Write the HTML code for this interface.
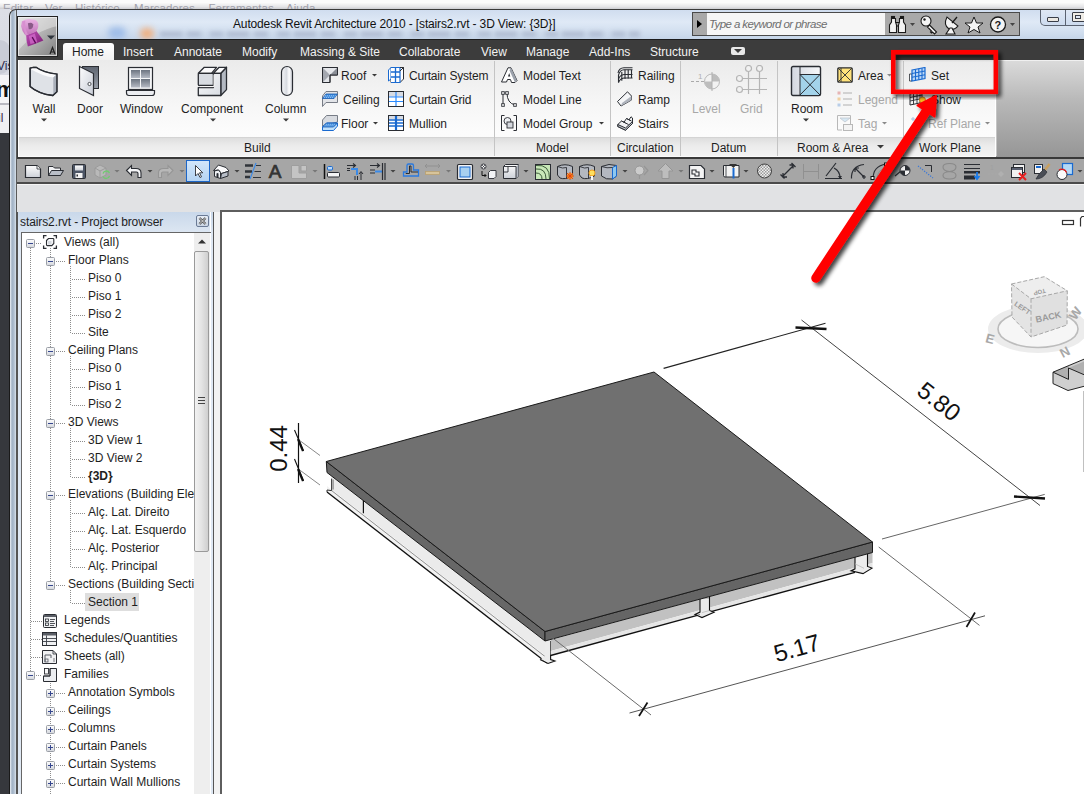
<!DOCTYPE html>
<html><head><meta charset="utf-8">
<style>
*{box-sizing:border-box}
html,body{margin:0;padding:0}
body{width:1084px;height:794px;overflow:hidden;position:relative;background:#fff;font-family:"Liberation Sans",sans-serif;font-size:12px;color:#1e1e1e}
.a{position:absolute}
.t{position:absolute;white-space:nowrap;line-height:14px}
</style></head><body>

<!-- desktop behind -->
<div class="a" style="left:0;top:0;width:1084px;height:10px;background:linear-gradient(#fbfbfb 25%,#e6e6e8 65%,#c2c4ca)"></div>
<div class="t" style="left:3px;top:1px;color:#a0a0aa;font-size:11.5px">Editar</div><div class="t" style="left:45px;top:1px;color:#a0a0aa;font-size:11.5px">Ver</div><div class="t" style="left:75px;top:1px;color:#a0a0aa;font-size:11.5px">Histórico</div><div class="t" style="left:134px;top:1px;color:#a0a0aa;font-size:11.5px">Marcadores</div><div class="t" style="left:208.5px;top:1px;color:#a0a0aa;font-size:11.5px">Ferramentas</div><div class="t" style="left:286px;top:1px;color:#a0a0aa;font-size:11.5px">Ajuda</div>
<div class="a" style="left:0;top:133px;width:10px;height:661px;background:#36383d"></div>
<div class="a" style="left:0;top:9px;width:10px;height:124px;background:linear-gradient(#dcdee6,#d6d8e0)"></div>
<div class="a" style="left:0;top:40px;width:10px;height:34px;background:#c9ccd6;border-radius:0 14px 14px 0"></div>
<div class="t" style="left:-3px;top:59px;color:#2a2a50;font-size:12px">Vis</div>
<div class="a" style="left:0;top:75px;width:10px;height:28px;background:#f4f4f6"></div>
<div class="t" style="left:-4px;top:78px;color:#111;font-size:22px;font-weight:bold;line-height:24px">m</div>
<div class="a" style="left:0;top:103px;width:10px;height:2px;background:#b8b8c0"></div>
<div class="a" style="left:0;top:105px;width:10px;height:28px;background:#f0f0f2"></div>
<div class="t" style="left:-2px;top:111px;color:#402040;font-size:12px">il</div>

<!-- window frame -->
<div class="a" style="left:9px;top:9px;width:1080px;height:790px;border-radius:7px 0 0 0;background:linear-gradient(90deg,#eef2f8 0px,#a0b1c4 2px,#b0bfd0 4px,#d8e2ec 6px,#5a5a5a 6px,#5a5a5a 7px,#dde 7px);border-top:1px solid #3a3a3a;border-left:1px solid #1a1a1a"></div>
<!-- title bar glass -->
<div class="a" style="left:17px;top:10px;width:1067px;height:30px;background:linear-gradient(#d0ddef,#dfe9f6 40%,#d3e0f0 70%,#c4d4e8)"></div>
<div class="a" style="left:160px;top:31px;width:480px;height:6px;background:repeating-linear-gradient(90deg,rgba(120,130,160,.32) 0 22px,rgba(170,180,205,.12) 22px 27px,rgba(110,120,150,.28) 27px 41px,rgba(180,190,210,.1) 41px 50px,rgba(120,130,160,.3) 50px 63px,rgba(180,190,210,.12) 63px 67px);filter:blur(2.2px)"></div>
<div class="a" style="left:108px;top:27px;width:18px;height:12px;background:#9fbde8;border-radius:9px;filter:blur(3px)"></div>
<div class="a" style="left:140px;top:28px;width:14px;height:11px;background:#f0b080;border-radius:6px;filter:blur(3px)"></div>
<div class="t" style="left:233px;top:17px;color:#111;font-size:12px;letter-spacing:-0.15px">Autodesk Revit Architecture 2010 - [stairs2.rvt - 3D View: {3D}]</div>

<!-- search box -->
<div class="a" style="left:692px;top:12px;width:328px;height:24px;background:#a9a9a9;border:1px solid #4a4a4a"></div>
<div class="a" style="left:707px;top:13px;width:178px;height:22px;background:#f6f6f6"></div>
<svg class="a" style="left:696px;top:19px" width="8" height="10"><path d="M1 1 L6 5 L1 9Z" fill="#000"/></svg>
<div class="t" style="left:709px;top:17px;color:#6e6e6e;font-size:11.5px;font-style:italic;letter-spacing:-0.6px">Type a keyword or phrase</div>
<svg class="a" style="left:886px;top:13px" width="134" height="22" viewBox="0 0 134 22">
 <g fill="#f4f4f4" stroke="#1a1a1a" stroke-width="1.1">
  <path d="M5.5 5.5 H9.5 V9 L10.5 12 V19.5 H3.5 V12 L5.5 9Z"/><path d="M13.5 5.5 H17.5 V9 L19.5 12 V19.5 H12.5 V12 L13.5 9Z"/>
  <path d="M9.5 9.5 H13.5 M10.5 13 H12.5"/>
  <rect x="5.5" y="3.5" width="3" height="2" fill="#1a1a1a"/><rect x="14.5" y="3.5" width="3" height="2" fill="#1a1a1a"/>
 </g>
 <path d="M24 10 L29 10 L26.5 13Z" fill="#444"/>
 <g stroke="#1a1a1a" fill="#f4f4f4" stroke-width="1.1"><path d="M43.5 12 L50.5 19 L48.5 21 L46.5 19 L45.5 20 L44.5 19 L45.5 18 L41.5 14Z"/><circle cx="40" cy="8" r="5"/><circle cx="38.5" cy="6.5" r="1.2" fill="#1a1a1a" stroke="none"/></g>
 <g stroke="#1a1a1a" fill="#f4f4f4" stroke-width="1.1"><path d="M61 4 Q57 12 63 16 Q68 18 72 13Z"/><path d="M64 15 L60 21 H69 L66 15Z"/><path d="M66 10 L71 4" stroke-width="1.3"/></g>
 <path d="M88 4 L90.5 10 L97 10 L92 14 L94 20 L88 16.5 L82 20 L84 14 L79 10 L85.5 10Z" fill="#f4f4f4" stroke="#1a1a1a"/>
 <circle cx="112" cy="11.5" r="7.5" fill="#f4f4f4" stroke="#1a1a1a" stroke-width="1.3"/>
 <text x="108.5" y="16" font-family="Liberation Sans" font-weight="bold" font-size="11" fill="#1a1a1a">?</text>
 <path d="M124 10 L129 10 L126.5 13Z" fill="#444"/>
</svg>
<!-- window buttons -->
<div class="a" style="left:1040px;top:10px;width:50px;height:16px;background:linear-gradient(#dfe8f5,#cddbee);border:1px solid #5a6270;border-top:none;border-radius:0 0 0 5px"></div>
<div class="a" style="left:1065px;top:10px;width:1px;height:15px;background:#5a6270"></div>
<div class="a" style="left:1047px;top:17px;width:12px;height:5px;border:1px solid #3a3e48;border-radius:1px;background:#ebe8e2"></div>
<div class="a" style="left:1072px;top:12px;width:13px;height:10px;border:1px solid #3a3e48;border-radius:1px;background:#efece6"></div>
<div class="a" style="left:1075px;top:15px;width:6px;height:4px;border:1px solid #3a3e48;background:#dfe8f5"></div>

<!-- tab bar -->
<div class="a" style="left:17px;top:39px;width:1067px;height:22px;background:#3c3c3c;border-top:1px solid #1c1c1c"></div>
<div class="a" style="left:63px;top:43px;width:51px;height:18px;background:linear-gradient(#fefefe,#f0f0f0);border-radius:3px 3px 0 0"></div>
<div class="t" style="left:72px;top:45px;color:#1e1e1e">Home</div>
<div class="t" style="left:123px;top:45px;color:#f2f2f2">Insert</div>
<div class="t" style="left:174px;top:45px;color:#f2f2f2">Annotate</div>
<div class="t" style="left:242px;top:45px;color:#f2f2f2">Modify</div>
<div class="t" style="left:300px;top:45px;color:#f2f2f2">Massing &amp; Site</div>
<div class="t" style="left:399px;top:45px;color:#f2f2f2">Collaborate</div>
<div class="t" style="left:481px;top:45px;color:#f2f2f2">View</div>
<div class="t" style="left:526px;top:45px;color:#f2f2f2">Manage</div>
<div class="t" style="left:589px;top:45px;color:#f2f2f2">Add-Ins</div>
<div class="t" style="left:650px;top:45px;color:#f2f2f2">Structure</div>
<div class="a" style="left:731px;top:47px;width:14px;height:8px;background:#e8e8e8;border-radius:2px"></div>
<svg class="a" style="left:734px;top:49px" width="8" height="5"><path d="M0 0 L8 0 L4 4Z" fill="#3c3c3c"/></svg>

<!-- ribbon -->
<div class="a" style="left:17px;top:60px;width:1067px;height:100px;background:#3c3c3c"></div>
<div class="a" style="left:18px;top:60px;width:978px;height:97px;background:linear-gradient(#ebebeb,#f6f6f6 45%,#fcfcfc 75%,#fafafa);border-left:1px solid #fff;border-right:1px solid #fff"></div>
<div class="a" style="left:996px;top:60px;width:88px;height:97px;background:linear-gradient(#dadada,#b9b9b9 40%,#969696);border-top:1px solid #f0f0f0"></div>
<div class="a" style="left:19px;top:137px;width:976px;height:19px;background:linear-gradient(#dedede,#ebebeb 40%,#f3f3f3);border-top:1px solid #d4d4d4"></div>
<div class="a" style="left:494px;top:61px;width:1px;height:95px;background:#c4c4c4"></div>
<div class="a" style="left:610px;top:61px;width:1px;height:95px;background:#c4c4c4"></div>
<div class="a" style="left:680px;top:61px;width:1px;height:95px;background:#c4c4c4"></div>
<div class="a" style="left:777px;top:61px;width:1px;height:95px;background:#c4c4c4"></div>
<div class="a" style="left:903px;top:61px;width:1px;height:95px;background:#c4c4c4"></div>
<div class="a" style="left:996px;top:61px;width:1px;height:95px;background:#c4c4c4"></div>

<!-- ribbon content -->
<!-- Build: large buttons -->
<svg class="a" style="left:28px;top:65px" width="32" height="32" viewBox="0 0 32 32">
 <path d="M2.1 3.2 L5.3 2.3 L8.4 2.5 Q15 7.5 28.9 9.1 L28.9 26.6 L24.8 30.5 Q10 28.5 2.1 21.4Z" fill="#dfe2e7" stroke="#2a2d33" stroke-width="1.3"/>
 <path d="M2.6 4 Q14 11 25.3 12.5 L28.5 9.4 Q15 7.5 8.4 2.9 L5.3 2.8Z" fill="#fbfbfc"/>
 <path d="M25.3 12.5 L28.5 9.4 L28.5 26.6 L25.3 30Z" fill="#aab0ba"/>
 <path d="M2.1 3.2 L5.3 2.3 L8.4 2.5 Q15 7.5 28.9 9.1 L28.9 26.6 L24.8 30.5 Q10 28.5 2.1 21.4Z" fill="none" stroke="#2a2d33" stroke-width="1.3"/>
</svg>
<svg class="a" style="left:78px;top:65px" width="23" height="32" viewBox="0 0 23 32">
 <defs><linearGradient id="gd" x1="0" y1="0" x2="1" y2="1"><stop offset="0" stop-color="#fdfdfe"/><stop offset="1" stop-color="#c9ced8"/></linearGradient><linearGradient id="gdk" x1="0" y1="0" x2="0" y2="1"><stop offset="0" stop-color="#5d6470"/><stop offset="1" stop-color="#9aa0aa"/></linearGradient></defs>
 <rect x="4.5" y="1.5" width="16" height="22" fill="url(#gdk)" stroke="#2a2d33"/>
 <path d="M1.5 1.5 L15.5 8.5 L15.5 30.5 L1.5 23.5Z" fill="url(#gd)" stroke="#2a2d33" stroke-width="1.2"/>
 <circle cx="11.5" cy="19" r="1.6" fill="#fff" stroke="#2a2d33" stroke-width=".8"/>
</svg>
<svg class="a" style="left:125px;top:66px" width="31" height="31" viewBox="0 0 31 31">
 <defs><linearGradient id="gwin" x1="0" y1="0" x2="0" y2="1"><stop offset="0" stop-color="#6c7480"/><stop offset="1" stop-color="#b5bac4"/></linearGradient></defs>
 <rect x="3.5" y="1.5" width="24" height="22" fill="#f4f5f7" stroke="#2a2d33" stroke-width="1.2"/>
 <rect x="6" y="4" width="9" height="8" fill="url(#gwin)"/><rect x="16" y="4" width="9" height="8" fill="url(#gwin)"/>
 <rect x="6" y="13" width="9" height="8.5" fill="url(#gwin)"/><rect x="16" y="13" width="9" height="8.5" fill="url(#gwin)"/>
 <path d="M1.5 24.5 H29.5 V27 Q29.5 29.5 27 29.5 H4 Q1.5 29.5 1.5 27Z" fill="#eceef2" stroke="#2a2d33" stroke-width="1.2"/>
</svg>
<svg class="a" style="left:197px;top:66px" width="32" height="32" viewBox="0 0 32 32">
 <defs><linearGradient id="gc" x1="0" y1="0" x2="1" y2="1"><stop offset="0" stop-color="#f8f9fa"/><stop offset="1" stop-color="#d9dde3"/></linearGradient></defs>
 <g stroke="#2a2d33" stroke-width="1.3" stroke-linejoin="round">
 <path d="M23.8 7.3 L29.5 1.3 V23.6 L23.8 29.5Z" fill="#b3b9c2"/>
 <path d="M16.4 7.3 L22.1 1.3 H29.5 L23.8 7.3Z" fill="#fbfbfc"/>
 <path d="M1.3 7.3 L7.3 1.3 H19.5 L14.5 7.3Z" fill="#fbfbfc"/>
 <path d="M16.4 7.3 H23.8 V29.5 H1.3 V21.6 H16.4Z" fill="url(#gc)"/>
 <rect x="1.3" y="7.3" width="15.1" height="12.2" rx="1" fill="#d8dce2"/>
 </g>
 <path d="M2.5 20.6 H17 V8.5" fill="none" stroke="#fff" stroke-width="1"/>
</svg>
<svg class="a" style="left:279px;top:65px" width="16" height="32" viewBox="0 0 16 32">
 <defs><linearGradient id="gcol" x1="0" y1="0" x2="1" y2="0"><stop offset="0" stop-color="#f5f6f8"/><stop offset=".45" stop-color="#d8dbe1"/><stop offset=".7" stop-color="#fdfdfe"/><stop offset="1" stop-color="#c4c8d0"/></linearGradient></defs>
 <rect x="2.5" y="1.5" width="11" height="29" rx="5.5" fill="url(#gcol)" stroke="#2a2d33" stroke-width="1.2"/>
</svg>
<div class="t" style="left:32.5px;top:102px">Wall</div>
<div class="t" style="left:77px;top:102px">Door</div>
<div class="t" style="left:120px;top:102px">Window</div>
<div class="t" style="left:181px;top:102px">Component</div>
<div class="t" style="left:265px;top:102px">Column</div>
<svg class="a" style="left:0;top:0" width="1084" height="160" viewBox="0 0 1084 160">
 <g fill="#3a3a3a">
  <path d="M41 118.5 H47 L44 121.5Z"/><path d="M210 118.5 H216 L213 121.5Z"/><path d="M283 118.5 H289 L286 121.5Z"/>
  <path d="M803 118.5 H809 L806 121.5Z"/>
  <path d="M372 74 H377 L374.5 76.5Z"/><path d="M373 122 H378 L375.5 124.5Z"/>
  <path d="M599 122 H604 L601.5 124.5Z"/>
  <path d="M877 145 H884 L880.5 148.5Z"/>
 </g>
 <g fill="#8a8a8a">
  <path d="M887 74 H892 L889.5 76.5Z"/><path d="M882 122 H887 L884.5 124.5Z"/><path d="M985 122 H990 L987.5 124.5Z"/>
 </g>
</svg>
<!-- Build: small -->
<svg class="a" style="left:322px;top:67px" width="16" height="16" viewBox="0 0 16 16">
 <path d="M.5 .5 H15.5 V8 H8 V15.5 H.5Z" fill="#e4e6ea" stroke="#2a2d33"/>
 <path d="M.5 .5 L8 8 L.5 15.5Z" fill="#a4a8b0"/><path d="M15.5 .5 L8 8 H15.5Z" fill="#8a8e96"/>
 <path d="M.5 .5 H15.5 V8 H8 V15.5 H.5Z" fill="none" stroke="#2a2d33"/>
</svg>
<svg class="a" style="left:322px;top:91px" width="16" height="16" viewBox="0 0 16 16">
 <path d="M.5 15.5 V5 L4 .5 H15.5 V11.5 H4Z" fill="#e2e4e8" stroke="#777c86"/>
 <path d="M.5 7.5 L4 3 H15.5 L12 7.5Z" fill="#3d8ce0" stroke="#1a5cb0" stroke-width=".8"/>
 <path d="M2 6.3 H12.5 M3 4.8 H13.8" stroke="#cfe4fb" stroke-width=".7" stroke-dasharray="1 1"/>
</svg>
<svg class="a" style="left:322px;top:115px" width="16" height="16" viewBox="0 0 16 16">
 <path d="M.5 11 V5 L4.5 .5 H15.5 V7Z" fill="#d8dbe0" stroke="#777c86"/>
 <path d="M.5 12 L4.5 8 H15.5 V11 L11.5 15.5 H.5Z" fill="#bfe0fb" stroke="#1a6ad0"/>
 <path d="M.5 12 L4.5 8 H15.5 L11.5 12Z" fill="#3d8ce0" stroke="#1a5cb0" stroke-width=".8"/>
 <path d="M2.5 10.8 H12.5 M3.8 9.3 H13.8" stroke="#cfe4fb" stroke-width=".7" stroke-dasharray="1 1"/>
</svg>
<svg class="a" style="left:388px;top:67px" width="16" height="16" viewBox="0 0 16 16">
 <path d="M3 .5 H15.5 V12 L12 15.5 H3Z" fill="#fff" stroke="#2a2d33"/>
 <path d="M.5 3 L3 .5 V12 L.5 14Z" fill="#fff" stroke="#1a6ad0"/>
 <path d="M3 .5 H12 V15.5 H3" fill="#fff" stroke="#1a6ad0" stroke-width="1.2"/>
 <path d="M3 5 H12 M3 10 H12 M7.5 .5 V15.5" stroke="#1a6ad0" stroke-width="1.3"/>
 <path d="M12 .5 L15.5 .5 L12 4" fill="none" stroke="#2a2d33"/>
</svg>
<svg class="a" style="left:388px;top:91px" width="16" height="16" viewBox="0 0 16 16">
 <rect x=".5" y=".5" width="15" height="15" fill="#fff" stroke="#2a2d33"/>
 <rect x="1" y="1" width="14" height="5" fill="#d8dce4"/>
 <path d="M8 1 V15 M1 6 H15 M1 10.5 H15" stroke="#2a8aff" stroke-width="1.2"/>
</svg>
<svg class="a" style="left:388px;top:115px" width="16" height="16" viewBox="0 0 16 16">
 <rect x=".5" y=".5" width="15" height="15" fill="#fff" stroke="#2a2d33"/>
 <rect x="1" y="1" width="14" height="3" fill="#d8dce4"/>
 <path d="M8 1 V15" stroke="#1a6ad0" stroke-width="2.2"/>
 <path d="M1 5 H15 M1 8 H15 M1 11 H15" stroke="#1a6ad0" stroke-width="1.3"/>
</svg>
<div class="t" style="left:341px;top:69px">Roof</div>
<div class="t" style="left:343px;top:93px">Ceiling</div>
<div class="t" style="left:341px;top:117px">Floor</div>
<div class="t" style="left:409px;top:69px;letter-spacing:-0.2px">Curtain System</div>
<div class="t" style="left:409px;top:93px;letter-spacing:-0.2px">Curtain Grid</div>
<div class="t" style="left:409px;top:117px">Mullion</div>
<!-- Model -->
<svg class="a" style="left:501px;top:67px" width="17" height="16" viewBox="0 0 17 16">
 <path d="M.5 15 L7 .8 H10 L16 13.5 L14 15.5 H10.5 L9.5 12.5 H6.5 L5.5 15Z" fill="#fff" stroke="#2a2d33"/>
 <path d="M10 .8 L16 13.5 L14 15.5 L8.5 3.5Z" fill="#9ca2ac"/>
 <path d="M7 9.5 H9.3 L8.2 6Z" fill="#2a2d33"/>
</svg>
<svg class="a" style="left:501px;top:91px" width="16" height="16" viewBox="0 0 16 16">
 <path d="M2 2 V14" stroke="#2a2d33"/>
 <path d="M6 2 Q6 12 14 14" fill="none" stroke="#2a2d33"/>
 <g fill="#fff" stroke="#2a2d33" stroke-width=".9"><rect x=".7" y=".7" width="2.6" height="2.6"/><rect x=".7" y="12.7" width="2.6" height="2.6"/><rect x="4.7" y=".7" width="2.6" height="2.6"/><rect x="12.7" y="12.7" width="2.6" height="2.6"/></g>
</svg>
<svg class="a" style="left:501px;top:115px" width="16" height="16" viewBox="0 0 16 16">
 <path d="M3.5 .5 H.5 V15.5 H3.5 M12.5 .5 H15.5 V15.5 H12.5" fill="none" stroke="#2a2d33"/>
 <circle cx="6.5" cy="6" r="3.5" fill="#eef0f3" stroke="#2a2d33" stroke-width=".9"/>
 <rect x="6" y="7" width="6" height="6" fill="#d6d9df" stroke="#2a2d33" stroke-width=".9"/>
</svg>
<div class="t" style="left:523px;top:69px">Model Text</div>
<div class="t" style="left:523px;top:93px">Model Line</div>
<div class="t" style="left:523px;top:117px">Model Group</div>
<!-- Circulation -->
<svg class="a" style="left:617px;top:67px" width="16" height="16" viewBox="0 0 16 16">
 <g fill="none" stroke="#2a2d33" stroke-width="1.1">
 <path d="M1 6 Q2 1 7 .8 H15.5"/><path d="M1.5 8 Q3 3 7 2.8 H15.5"/>
 <path d="M1.5 8 V15.5 M4.8 5 V13.8 M8 2.8 V12 M11.2 2.8 V11.5 M14.5 2.8 V11"/>
 <path d="M1.5 12 Q3 8 7 7.5 H15.5"/><path d="M1.5 15.5 Q3 11.5 7 11 H15.5"/>
 </g>
</svg>
<svg class="a" style="left:617px;top:91px" width="16" height="16" viewBox="0 0 16 16">
 <path d="M.5 10.5 L10.5 .8 L14.5 5 L14.5 9 L4 15Z" fill="#f4f5f7" stroke="#2a2d33"/>
 <path d="M14.5 5 L14.5 9 L4 15 L5 12Z" fill="#aeb3bc"/>
</svg>
<svg class="a" style="left:617px;top:115px" width="16" height="16" viewBox="0 0 16 16">
 <g stroke="#2a2d33" stroke-width="1" stroke-linejoin="round">
 <path d="M.8 9.5 L4.5 6 L7 7.2 L9.5 3.5 L12 4.8 L14 1.8 L15.5 3 V8.5 L8.5 15.2 L.8 11.5Z" fill="#f2f3f5"/>
 <path d="M.8 9.5 L8.5 13 L15.5 6.5 V8.5 L8.5 15.2 L.8 11.5Z" fill="#c5c9d0"/>
 <path d="M4.5 6 L11.5 9.5 M7 7.2 L8.5 8 M9.5 3.5 L13.5 5.5 M12 4.8 L14.5 6" fill="none"/>
 </g>
</svg>
<div class="t" style="left:638px;top:69px">Railing</div>
<div class="t" style="left:638px;top:93px">Ramp</div>
<div class="t" style="left:638px;top:117px">Stairs</div>
<!-- Datum -->
<svg class="a" style="left:690px;top:71px" width="32" height="22" viewBox="0 0 32 22">
 <path d="M1 10.5 H28" stroke="#aaaaaa" stroke-dasharray="3 2"/>
 <text x="8" y="8" font-family="Liberation Sans" font-size="8" fill="#b0b0b0">1</text>
 <circle cx="22" cy="10.5" r="7.5" fill="#f2f2f2" stroke="#b8b8b8"/>
 <path d="M22 3 A7.5 7.5 0 0 1 29.5 10.5 H22Z M22 18 A7.5 7.5 0 0 1 14.5 10.5 H22Z" fill="#bdbdbd"/>
 <path d="M22 1 V20" stroke="#b0b0b0"/>
</svg>
<svg class="a" style="left:736px;top:65px" width="32" height="30" viewBox="0 0 32 30">
 <g fill="#f2f2f2" stroke="#b5b5b5" stroke-width="1.2"><circle cx="12.5" cy="3.5" r="3"/><circle cx="23.5" cy="3.5" r="3"/><circle cx="3.5" cy="13.5" r="3"/><circle cx="3.5" cy="24.5" r="3"/></g>
 <path d="M12.5 6.5 V29 M23.5 6.5 V29 M6.5 13.5 H31 M6.5 24.5 H31" stroke="#b5b5b5" stroke-width="1.2"/>
</svg>
<div class="t" style="left:692px;top:102px;color:#a8a8a8">Level</div>
<div class="t" style="left:740px;top:102px;color:#a8a8a8">Grid</div>
<!-- Room & Area -->
<svg class="a" style="left:790px;top:65px" width="32" height="32" viewBox="0 0 32 32">
 <defs><linearGradient id="grm" x1="0" y1="0" x2="1" y2="0"><stop offset="0" stop-color="#d4d8e0"/><stop offset="1" stop-color="#f7f8fa"/></linearGradient></defs>
 <rect x="1.5" y="1.5" width="29" height="29" rx="1.5" fill="url(#grm)" stroke="#2a2d33" stroke-width="1.4"/>
 <rect x="10" y="9.5" width="20" height="20.5" fill="#a3d3ea"/>
 <path d="M10 2 V30 M10 9.5 H30 M10 9.5 L30 30 M30 9.5 L10 30" stroke="#2a2d33" stroke-width="1"/>
</svg>
<div class="t" style="left:791px;top:102px">Room</div>
<svg class="a" style="left:837px;top:67px" width="16" height="16" viewBox="0 0 16 16">
 <rect x=".8" y=".8" width="14.4" height="14.4" rx="1" fill="#ffe27a" stroke="#2a2d33" stroke-width="1.3"/>
 <path d="M1 1 L15 15 M15 1 L1 15 M4 1 V15" stroke="#2a2d33" stroke-width=".9"/>
</svg>
<svg class="a" style="left:837px;top:91px" width="16" height="16" viewBox="0 0 16 16">
 <rect x=".5" y=".5" width="3" height="3" fill="#e6b4b4"/><rect x=".5" y="6.5" width="3" height="3" fill="#f0cfa0"/><rect x=".5" y="12.5" width="3" height="3" fill="#b8cde8"/>
 <path d="M6 2 H15 M6 8 H15 M6 14 H15" stroke="#b0b0b0"/>
</svg>
<svg class="a" style="left:837px;top:115px" width="16" height="16" viewBox="0 0 16 16">
 <path d="M.5 .5 H13.5 V9 M.5 .5 V15 H5" fill="none" stroke="#b8b8b8"/>
 <path d="M3 3 H13 L8 7Z" fill="#d6e8f4" stroke="#c0c8d0" stroke-width=".8"/>
 <rect x="6.5" y="9.5" width="9" height="6" fill="#f4f4f4" stroke="#b8b8b8"/>
</svg>
<div class="t" style="left:858px;top:69px">Area</div>
<div class="t" style="left:858px;top:93px;color:#a8a8a8">Legend</div>
<div class="t" style="left:858px;top:117px;color:#a8a8a8">Tag</div>
<!-- Work plane -->
<svg class="a" style="left:909px;top:67px" width="17" height="16" viewBox="0 0 17 16">
 <path d="M.5 7 H3 V14 H.5Z" fill="#fff" stroke="#2a2d33" stroke-width=".8"/>
 <path d="M3 3 L16 .5 V11.5 L3 14Z" fill="#bcd8f6" stroke="#1a6ad0" stroke-width="1.2"/>
 <path d="M6.5 2.5 V13.3 M9.8 1.8 V12.7 M13 1.2 V12.1 M3 6.5 L16 4 M3 10.2 L16 7.7" stroke="#1a6ad0" stroke-width="1.1"/>
</svg>
<svg class="a" style="left:909px;top:91px" width="17" height="16" viewBox="0 0 17 16">
 <path d="M1 3 L13 .5 V11.5 L1 14Z" fill="#f2f2f2" stroke="#2a2d33" stroke-width="1"/>
 <path d="M4.5 2.3 V13.3 M8 1.6 V12.6 M11 1 V12 M1 6.5 L13 4 M1 10 L13 7.5" stroke="#2a2d33" stroke-width=".9"/>
 <circle cx="13.5" cy="9" r="3" fill="#f5b820" stroke="#c87a10" stroke-width=".8"/>
</svg>
<svg class="a" style="left:909px;top:115px" width="17" height="16" viewBox="0 0 17 16">
 <path d="M3 15 L15 3" stroke="#c8b8a0" stroke-width="2"/><path d="M4 2 V6 M2 4 H6" stroke="#a8c0e0" stroke-width="1"/>
</svg>
<div class="t" style="left:931px;top:69px">Set</div>
<div class="t" style="left:931px;top:93px">Show</div>
<div class="t" style="left:928px;top:117px;color:#a8a8a8">Ref Plane</div>
<!-- panel labels -->
<div class="t" style="left:244px;top:141px">Build</div>
<div class="t" style="left:536px;top:141px">Model</div>
<div class="t" style="left:617px;top:141px">Circulation</div>
<div class="t" style="left:711px;top:141px">Datum</div>
<div class="t" style="left:797px;top:141px">Room &amp; Area</div>
<div class="t" style="left:919px;top:141px">Work Plane</div>

<!-- app button -->
<svg class="a" style="left:17px;top:16px" width="41" height="41" viewBox="0 0 41 41">
 <defs>
  <linearGradient id="gapp" x1="0" y1="0" x2="1" y2="1"><stop offset="0" stop-color="#e4e4e4"/><stop offset=".5" stop-color="#b4b4b4"/><stop offset="1" stop-color="#7c7c7c"/></linearGradient>
  <linearGradient id="grp" x1="0" y1="0" x2="0" y2="1"><stop offset="0" stop-color="#eab4e4"/><stop offset="1" stop-color="#c070b8"/></linearGradient>
  <linearGradient id="grl" x1="0" y1="0" x2="1" y2="1"><stop offset="0" stop-color="#c050b8"/><stop offset="1" stop-color="#7a1a72"/></linearGradient>
 </defs>
 <rect x="0" y="0" width="41" height="41" fill="url(#gapp)"/>
 <path d="M0 36 Q18 14 41 10 V0 H0Z" fill="#e6e6e6" opacity=".55"/>
 <g transform="translate(4,3) scale(.86) translate(-4,-2)">
 <path d="M10 21 L22 16 L30 27 L20 31 L12 34 Q10 28 10 21Z" fill="url(#grl)"/>
 <path d="M13 22 L20 19 L23 29 L15 31Z" fill="#d068c8" opacity=".8"/>
 <path d="M17 23 L21 30" stroke="#5a0a58" stroke-width="1.5"/>
 <path d="M5 5 Q8 1.5 14 2 L20 3 Q25 5 24 11 Q23 16 19 18 L9 21 Q5 16 4 10Z" fill="url(#grp)"/>
 <path d="M5 5 L9 21 L12 20 Q8 12 9 4Z" fill="#d890d0"/>
 <path d="M12 7 Q16 5.5 18 8 Q19 12 15 14 L13 14Z" fill="#8a5a88"/>
 </g>
 <path d="M30 19.5 H38 L34 23.5Z" fill="#2e343c"/>
 <path d="M33 38 L35.5 31.5 L38 38 M34 36 H37" fill="none" stroke="#222" stroke-width="1.2"/>
 <rect x=".5" y=".5" width="40" height="40" fill="none" stroke="#222"/>
 <rect x="1.5" y="1.5" width="38" height="38" fill="none" stroke="#f4f4f4" stroke-opacity=".7"/>
</svg>

<!-- QAT -->
<div class="a" style="left:17px;top:157px;width:1067px;height:27px;background:#a6a6a6;border-top:2px solid #393939;border-bottom:2px solid #4a4a4a"></div>
<svg class="a" style="left:0;top:0" width="1084" height="190" viewBox="0 0 1084 190">
<defs><linearGradient id="gq" x1="0" y1="0" x2="0" y2="1"><stop offset="0" stop-color="#fdfdfd"/><stop offset="1" stop-color="#cdd1d8"/></linearGradient><linearGradient id="gsel" x1="0" y1="0" x2="0" y2="1"><stop offset="0" stop-color="#d2e6fa"/><stop offset="1" stop-color="#b4d3f2"/></linearGradient></defs>
<path d="M25.5 165.5 H37 L40.5 169 V177.5 H25.5Z" fill="url(#gq)" stroke="#2a2d33" stroke-width="1.2"/><path d="M37 165.5 V169 H40.5" fill="#fff" stroke="#2a2d33" stroke-width=".8"/>
<path d="M48.5 175.5 V166.5 H53 L54.5 168 H60.5 V175.5Z" fill="#f2f3f5" stroke="#2a2d33"/><path d="M48.5 175.5 L51.5 170.5 H63.5 L60.5 175.5Z" fill="#b9bec7" stroke="#2a2d33"/>
<rect x="72.5" y="164.5" width="13" height="14" rx="1" fill="#4c5565" stroke="#2a2d33"/><rect x="75" y="165.5" width="8" height="5" fill="url(#gq)"/><rect x="75.5" y="173" width="7" height="5" fill="#f4f4f4"/><rect x="76.5" y="174.5" width="1.5" height="2" fill="#2a2d33"/>
<g opacity=".9"><path d="M95 168 L100 165 L106 168 V175 L100 178 L95 175Z" fill="#bcbcbc" stroke="#9a9a9a"/><path d="M100 171 V178 M95 168 L100 171 L106 168" stroke="#9a9a9a" fill="none"/><path d="M103 173.5 A3.5 3.5 0 0 1 109.5 173 M109.5 176 A3.5 3.5 0 0 1 103 176.5" stroke="#6ad06a" stroke-width="1.3" fill="none"/></g>
<path d="M114.5 170 H119.5 L117 172.5Z" fill="#777"/>
<path d="M126.5 170.5 L131.5 165.5 V168.5 H136 Q141 168.5 141 173 V177.5 H138 V173.5 Q138 172 136.5 172 H131.5 V175.5Z" fill="#f4f5f7" stroke="#2a2d33" stroke-width="1.1"/>
<path d="M147.5 170 H152.5 L150 172.5Z" fill="#444"/>
<path d="M173 170.5 L168 165.5 V168.5 H163.5 Q158.5 168.5 158.5 173 V177.5 H161.5 V173.5 Q161.5 172 163 172 H168 V175.5Z" fill="#b8b8b8" stroke="#959595" stroke-width="1.1"/>
<path d="M179.5 170 H184.5 L182 172.5Z" fill="#777"/>
<rect x="186.5" y="160.5" width="23" height="21" fill="url(#gsel)" stroke="#1c66c8"/>
<path d="M195.5 165.5 V176 L198 173.5 L200 177.5 L201.5 176.8 L199.5 172.8 H202.8Z" fill="#fff" stroke="#2a2d33" stroke-width=".9"/>
<path d="M213.5 170.5 L218.5 165 L226 167.5 L229 171 L221.5 173.5 L218.5 170Z" fill="#fbfbfc" stroke="#2a2d33" stroke-width="1"/><path d="M214.5 171 V176.5 L220.5 178.5 V172.5 L218.5 170Z" fill="#eef0f3" stroke="#2a2d33" stroke-width="1"/><path d="M220.5 178.5 L228 176 V171.5 L221.5 173.5 Z" fill="#b8bec8" stroke="#2a2d33" stroke-width="1"/><path d="M216.5 177 V173.5 Q217.5 172.5 218.5 173.5 V177.8" fill="#2a2d33"/>
<path d="M234.5 170 H239.5 L237 172.5Z" fill="#444"/>
<path d="M245 165.5 H253 M245 171.5 H252 M245 177 H250" stroke="#30343a" stroke-width="2.4"/><path d="M256 165.5 H261 M254.5 171.5 H261 M253 177.5 H261" stroke="#30343a" stroke-width="1"/><path d="M250 179 L256 163" stroke="#3a8ae8" stroke-width="1.2"/>
<text x="268.8" y="178.2" font-family="Liberation Sans" font-size="19" fill="#333" stroke="#333" stroke-width=".7">A</text>
<path d="M291.5 165.5 H299 V173 H306.5 V178.5 H291.5Z M301 165.5 H306.5 V171 H301Z" fill="#c4c4c4" stroke="#9e9e9e"/>
<path d="M312.5 170 H317.5 L315 172.5Z" fill="#777"/>
<path d="M324.5 164 V179" stroke="#111" stroke-width="1.5"/><rect x="327.5" y="166.5" width="5" height="3.5" rx="1" fill="#b8d8f8" stroke="#1a6ad0"/><rect x="327.5" y="172.5" width="12" height="4.5" rx="1" fill="#f4f4f4" stroke="#2a2d33"/>
<path d="M347 165.5 H355 M353 163.5 L355.5 165.5 L353 167.5 M347 168.5 H350 M347 170.5 H350" stroke="#2a2d33" fill="none" stroke-width="1.1"/><path d="M351 169 H357 V175" fill="none" stroke="#3a8ae8" stroke-width="2"/><path d="M355 176 V180 M357.5 176 V180 M361 180 V172 M359 174 L361 171.5 L363 174" stroke="#2a2d33" fill="none" stroke-width="1"/>
<path d="M370 165.5 H379 M377 163.5 L379.5 165.5 L377 167.5 M370 170 H375 M370 173 H375" stroke="#2a2d33" fill="none" stroke-width="1.1"/><path d="M375 171.5 H382" stroke="#3a8ae8" stroke-width="2"/><path d="M382.5 163 V180 M385 163 V180" stroke="#2a2d33" stroke-width="1.2"/>
<path d="M390.5 170 H395.5 L393 172.5Z" fill="#444"/>
<path d="M403.5 176 V172 H407 V165.5 Q407 164 408.5 164 H412 Q413.5 164 413.5 165.5 V170 H418.5 V176Z" fill="none" stroke="#2a7ae0" stroke-width="1.3"/><path d="M406 174 V173.5 H409.5 V166 H411 V172 H418" fill="none" stroke="#2a2d33" stroke-width="1"/>
<path d="M425 166 H440 M427 164 L425 166 L427 168 M438 164 L440 166 L438 168" stroke="#909090" fill="none"/><rect x="425.5" y="171.5" width="14" height="3" fill="#d8c49a" stroke="#b8a070" stroke-width=".8"/>
<path d="M446.0 170 H451.0 L448.5 172.5Z" fill="#777"/>
<rect x="457.5" y="164.5" width="15" height="15" rx="1" fill="#f4f4f4" stroke="#2a2d33" stroke-width="1.2"/><rect x="460" y="167" width="10" height="10" fill="#a8d0f0" stroke="#1a6ad0"/>
<circle cx="483.5" cy="166.5" r="2.5" fill="#f4f4f4" stroke="#2a2d33" stroke-width=".9"/><path d="M482 165 L485 168 M485 165 L482 168" stroke="#2a2d33" stroke-width=".7"/><path d="M482 171 V175.5 H486 M484.5 174 L486 175.5 L484.5 177" stroke="#111" fill="none"/><path d="M488.5 172.5 L490.5 170.5 H496 V176.5 L494 178.5 H488.5Z" fill="#f2f3f5" stroke="#2a2d33" stroke-width=".9"/>
<path d="M503.5 166.5 L505.5 164.5 H518.5 V176 L516 178.5 H503.5Z" fill="url(#gq)" stroke="#2a2d33"/><path d="M516 166.5 L518.5 164.5 V176 L516 178.5Z" fill="#b0b5be"/><path d="M503.5 166.5 H516 V178.5 M508 166.5 V172 H503.5" fill="none" stroke="#2a2d33" stroke-width=".9"/>
<path d="M523.5 170 H528.5 L526 172.5Z" fill="#444"/>
<rect x="535.5" y="164.5" width="15" height="15" fill="#c8e8b8" stroke="#2a2d33"/><path d="M536 169 Q546 168 546 179 M536 173 Q542 173 542 179 M536 165.5 Q550 164 549.5 179" fill="none" stroke="#2a4a2a" stroke-width=".9"/>
<path d="M557.5 166.5 Q565 163 572.5 166.5 V176 Q565 180 560 178 L557.5 175Z" fill="#b4b8c0" stroke="#2a2d33"/><path d="M557.5 166.5 Q563 169 566.5 167.5 V178.5" fill="none" stroke="#2a2d33" stroke-width=".9"/><circle cx="570" cy="176" r="3" fill="#f8a020"/><path d="M566 176 H574 M570 172 V180 M567 173 L573 179 M573 173 L567 179" stroke="#e84010" stroke-width=".9"/>
<path d="M579.5 166.5 Q587 163 594.5 166.5 V176 Q587 180 582 178 L579.5 175Z" fill="#b4b8c0" stroke="#2a2d33"/><path d="M579.5 166.5 Q585 169 588.5 167.5 V178.5" fill="none" stroke="#2a2d33" stroke-width=".9"/><circle cx="592" cy="173" r="3" fill="#ffe060" stroke="#f0a020"/><rect x="591" y="176" width="2" height="4" fill="#f8f8f8"/>
<path d="M601.5 166.5 Q609 163 616.5 165.5 V176 L612.5 179 Q606 180 601.5 176Z" fill="#b4b8c0" stroke="#2a2d33"/><path d="M612.5 167.5 L616.5 165.5 V176 L612.5 179Z" fill="#8ec8f0" stroke="#1a6ad0"/><path d="M601.5 166.5 Q607 168.5 612.5 167.5" fill="none" stroke="#2a2d33" stroke-width=".9"/>
<path d="M622.5 170 H627.5 L625 172.5Z" fill="#444"/>
<circle cx="639.5" cy="170.5" r="4.5" fill="#cbcbcb" stroke="#969696"/><path d="M644 166 L648 170.5 L644 175 M639.5 175 V179" stroke="#969696" fill="none" stroke-width="1.2"/>
<path d="M658 171 L665.5 163.5 L673 171 H669 V178.5 H662 V171Z" fill="#bdbdbd" stroke="#959595"/>
<path d="M678.5 170 H683.5 L681 172.5Z" fill="#777"/>
<path d="M689.5 165.5 H701 L704.5 169 V178.5 H689.5Z" fill="#f4f4f4" stroke="#2a2d33" stroke-width="1.2"/><path d="M692 170 H696 V172 H699 V176 H695 V174 H692Z" fill="none" stroke="#2a2d33" stroke-width="1.1"/>
<path d="M709.5 170 H714.5 L712 172.5Z" fill="#444"/>
<path d="M723.5 165.5 H739 V177 H725 Q723.5 177 723.5 175.5Z" fill="#f2f2f2" stroke="#2a2d33"/><path d="M726 165.5 V177" stroke="#2a2d33" stroke-width=".8"/><path d="M729 164 H737 L733.5 168Z" fill="#333"/><path d="M733.5 168 V178.5" stroke="#1a6ad0" stroke-width="2"/>
<path d="M743.5 170 H748.5 L746 172.5Z" fill="#444"/>
<defs><pattern id="pchk" width="3" height="3" patternUnits="userSpaceOnUse"><rect width="3" height="3" fill="#f0f0f0"/><rect width="1.5" height="1.5" fill="#9a9a9a"/><rect x="1.5" y="1.5" width="1.5" height="1.5" fill="#9a9a9a"/></pattern></defs><circle cx="764.5" cy="171" r="7" fill="url(#pchk)" stroke="#444" stroke-width="1"/>
<path d="M782 177 L794 165 M783 173 V177 H787 M793 164.5 V168.5 M789.5 165 H794 M780.5 174.5 L784.5 178.5 M791.5 163 L795.5 167" stroke="#2a2d33" stroke-width="1.3" fill="none"/>
<path d="M803.5 164 V179 M818.5 164 V179 M803.5 171.5 H818.5" stroke="#909090"/>
<path d="M825 178.5 H842 M826 176 L836 163 M834 168 Q840 171 840 178" stroke="#2a2d33" stroke-width="1.2" fill="none"/><path d="M838 176 L840 179 L842 176" fill="#2a2d33"/>
<path d="M851.5 178.5 Q851 166 864 164.5 M855 168 L864 177 M855 168 V172 M855 168 H859 M862 177 H866 M864 175 V179" stroke="#2a2d33" stroke-width="1.2" fill="none"/>
<path d="M873 179 Q873 166 886 164" stroke="#2a2d33" stroke-width="1.1" fill="none"/><path d="M877 179 Q877 170 886 167.5" stroke="#909090" stroke-width="1" fill="none"/><rect x="871" y="176.5" width="3" height="3" fill="#fff" stroke="#111" stroke-width="1"/><rect x="884.5" y="163" width="3" height="3" fill="#fff" stroke="#111" stroke-width="1"/>
<path d="M895 176 L901 171" stroke="#2a2d33" stroke-width="1.2"/><circle cx="905" cy="170.5" r="5" fill="#f4f4f4" stroke="#2a2d33"/><path d="M905 165.5 A5 5 0 0 1 910 170.5 H905Z M905 175.5 A5 5 0 0 1 900 170.5 H905Z" fill="#2a2d33"/>
<path d="M918 166 L933 178" stroke="#3a78d8" stroke-width="1.2" stroke-dasharray="1.3 1.3"/><path d="M925 165.5 H931.5 V172" stroke="#2a2d33" fill="none"/>
<path d="M949.5 163.5 Q956 163.5 956 167 Q956 171 949.5 171.5 Q943 172 943 175.5 Q943 179 949.5 179 Q956 179 956 175.5 Q956 172 949.5 171.5 Q943 171 943 167 Q943 163.5 949.5 163.5Z" stroke="#8a8a8a" fill="none" stroke-width="1.1"/>
<path d="M964 164.5 H980 M964 168.5 H980" stroke="#2a2d33" stroke-width="1.2"/><rect x="964" y="171" width="16" height="2.5" fill="#2a2d33"/><rect x="964" y="175.5" width="11" height="4" fill="#2a2d33"/><path d="M977 172 V178 M974.5 176 L977 179 L979.5 176" stroke="#1a7ae8" stroke-width="1.8" fill="none"/>
<path d="M988 174 H999" stroke="#a8a8a8" stroke-dasharray="2 1.5"/><text x="990" y="170" font-family="Liberation Sans" font-size="7" fill="#a0a0a0">1</text><path d="M998 174 L1001 171 L1004 174 L1001 177Z" fill="#b0b0b0"/>
<rect x="1013.5" y="164.5" width="11" height="8" fill="#f2f2f2" stroke="#2a2d33"/><rect x="1011.5" y="167.5" width="11" height="10" fill="#f2f2f2" stroke="#2a2d33"/><rect x="1012" y="168" width="10" height="2" fill="#5a6070"/><path d="M1019 173 L1026 180 M1026 173 L1019 180" stroke="#e82020" stroke-width="2"/>
<rect x="1034.5" y="164.5" width="8" height="9" fill="#f2f2f2" stroke="#2a2d33"/><rect x="1036" y="166" width="5" height="2" fill="#1a6ad0"/><path d="M1049.5 164 L1045 170" stroke="#c8a060" stroke-width="2.5"/><path d="M1044 169 L1047 172 Q1043 179 1036 179 Q1039 173 1044 169Z" fill="#4a4e56" stroke="#2a2d33" stroke-width=".7"/>
<rect x="1062.5" y="163.5" width="10" height="11" fill="#b4d8f4" stroke="#1a6ad0" stroke-width="1.2"/><circle cx="1062" cy="174.5" r="5" fill="#fafafa" stroke="#2a2d33"/><path d="M1059 170 A5 5 0 0 1 1066.5 172.5" stroke="#e82020" stroke-width="1.3" fill="none"/>
<path d="M1077.5 170 H1082.5 L1080 172.5Z" fill="#444"/>
</svg>
<!-- light strip -->
<div class="a" style="left:17px;top:184px;width:1067px;height:28px;background:#e1e2e4;border-top:1px solid #f4f4f4"></div>

<!-- project browser -->
<div class="a" style="left:16px;top:212px;width:2px;height:582px;background:#555"></div>
<div class="a" style="left:18px;top:212px;width:196px;height:582px;background:#dfe8f3"></div>
<div class="a" style="left:18px;top:212px;width:195px;height:20px;background:linear-gradient(#c9d8ea,#dce6f2)"></div>
<div class="t" style="left:20px;top:215px;color:#1e1e1e;letter-spacing:-0.1px">stairs2.rvt - Project browser</div>
<div class="a" style="left:196px;top:215px;width:13px;height:12px;border:1px solid #6a7a95;border-radius:2px;background:linear-gradient(#e8eef6,#cbd6e4)"></div>
<svg class="a" style="left:198px;top:217px" width="9" height="8"><path d="M1.5 1 L7.5 7 M7.5 1 L1.5 7" stroke="#444" stroke-width="2.4"/><path d="M1.5 1 L7.5 7 M7.5 1 L1.5 7" stroke="#f4f4f4" stroke-width=".9"/></svg>
<div class="a" style="left:210px;top:212px;width:1px;height:582px;background:#fff"></div>
<div class="a" style="left:213px;top:212px;width:1px;height:582px;background:#555"></div>
<div class="a" style="left:214px;top:212px;width:7px;height:582px;background:#f2f2f2"></div>
<!-- tree box -->
<div class="a" style="left:21px;top:232px;width:190px;height:562px;background:#fff;border-left:1px solid #666;border-top:1px solid #666"></div>
<!-- scrollbar -->
<div class="a" style="left:194px;top:233px;width:16px;height:561px;background:#eeeeee"></div>
<svg class="a" style="left:197px;top:238px" width="10" height="7"><path d="M1 5.5 L5 1.5 L9 5.5Z" fill="#333"/></svg>
<div class="a" style="left:194px;top:251px;width:15px;height:301px;border:1px solid #9a9a9a;border-radius:2px;background:linear-gradient(90deg,#f2f2f2,#e4e4e4 50%,#cfcfcf)"></div>
<svg class="a" style="left:197px;top:396px" width="9" height="10"><path d="M1 1.5 H8 M1 4.5 H8 M1 7.5 H8" stroke="#444" stroke-width="1"/></svg>

<!-- tree -->
<div class="a" style="left:22px;top:233px;width:172px;height:561px;overflow:hidden">
<div class="t" style="left:42px;top:2px;">Views (all)</div>
<div class="t" style="left:46px;top:20px;">Floor Plans</div>
<div class="t" style="left:66px;top:38px;">Piso 0</div>
<div class="t" style="left:66px;top:56px;">Piso 1</div>
<div class="t" style="left:66px;top:74px;">Piso 2</div>
<div class="t" style="left:66px;top:92px;">Site</div>
<div class="t" style="left:46px;top:110px;">Ceiling Plans</div>
<div class="t" style="left:66px;top:128px;">Piso 0</div>
<div class="t" style="left:66px;top:146px;">Piso 1</div>
<div class="t" style="left:66px;top:164px;">Piso 2</div>
<div class="t" style="left:46px;top:182px;">3D Views</div>
<div class="t" style="left:66px;top:200px;">3D View 1</div>
<div class="t" style="left:66px;top:218px;">3D View 2</div>
<div class="t" style="left:66px;top:236px;font-weight:bold;">{3D}</div>
<div class="t" style="left:46px;top:254px;">Elevations (Building Elevation)</div>
<div class="t" style="left:66px;top:272px;">Alç. Lat. Direito</div>
<div class="t" style="left:66px;top:290px;">Alç. Lat. Esquerdo</div>
<div class="t" style="left:66px;top:308px;">Alç. Posterior</div>
<div class="t" style="left:66px;top:326px;">Alç. Principal</div>
<div class="t" style="left:46px;top:344px;">Sections (Building Section)</div>
<div class="a" style="left:63px;top:360px;width:54px;height:18px;background:#dedede"></div>
<div class="t" style="left:66px;top:362px;">Section 1</div>
<div class="t" style="left:42px;top:380px;">Legends</div>
<div class="t" style="left:42px;top:398px;">Schedules/Quantities</div>
<div class="t" style="left:42px;top:416px;">Sheets (all)</div>
<div class="t" style="left:42px;top:434px;">Families</div>
<div class="t" style="left:46px;top:452px;">Annotation Symbols</div>
<div class="t" style="left:46px;top:470px;">Ceilings</div>
<div class="t" style="left:46px;top:488px;">Columns</div>
<div class="t" style="left:46px;top:506px;">Curtain Panels</div>
<div class="t" style="left:46px;top:524px;">Curtain Systems</div>
<div class="t" style="left:46px;top:542px;">Curtain Wall Mullions</div>
<div class="t" style="left:46px;top:560px;">Detail Items</div>
<svg class="a" style="left:0;top:0" width="172" height="561">
<defs><linearGradient id="gexp" x1="0" y1="0" x2="0" y2="1"><stop offset="0" stop-color="#fdfdfd"/><stop offset="1" stop-color="#d4d7dd"/></linearGradient></defs>
<path d="M8.5 15 V442" stroke="#8c8c8c" stroke-dasharray="1 1"/>
<path d="M28.5 15 V352" stroke="#8c8c8c" stroke-dasharray="1 1"/>
<path d="M48.5 33 V101" stroke="#8c8c8c" stroke-dasharray="1 1"/>
<path d="M48.5 123 V173" stroke="#8c8c8c" stroke-dasharray="1 1"/>
<path d="M48.5 195 V245" stroke="#8c8c8c" stroke-dasharray="1 1"/>
<path d="M48.5 267 V335" stroke="#8c8c8c" stroke-dasharray="1 1"/>
<path d="M48.5 357 V371" stroke="#8c8c8c" stroke-dasharray="1 1"/>
<path d="M28.5 448 V730" stroke="#8c8c8c" stroke-dasharray="1 1"/>
<path d="M14 10.5 H20" stroke="#8c8c8c" stroke-dasharray="1 1"/>
<path d="M34 28.5 H44" stroke="#8c8c8c" stroke-dasharray="1 1"/>
<path d="M50 46.5 H64" stroke="#8c8c8c" stroke-dasharray="1 1"/>
<path d="M50 64.5 H64" stroke="#8c8c8c" stroke-dasharray="1 1"/>
<path d="M50 82.5 H64" stroke="#8c8c8c" stroke-dasharray="1 1"/>
<path d="M50 100.5 H64" stroke="#8c8c8c" stroke-dasharray="1 1"/>
<path d="M34 118.5 H44" stroke="#8c8c8c" stroke-dasharray="1 1"/>
<path d="M50 136.5 H64" stroke="#8c8c8c" stroke-dasharray="1 1"/>
<path d="M50 154.5 H64" stroke="#8c8c8c" stroke-dasharray="1 1"/>
<path d="M50 172.5 H64" stroke="#8c8c8c" stroke-dasharray="1 1"/>
<path d="M34 190.5 H44" stroke="#8c8c8c" stroke-dasharray="1 1"/>
<path d="M50 208.5 H64" stroke="#8c8c8c" stroke-dasharray="1 1"/>
<path d="M50 226.5 H64" stroke="#8c8c8c" stroke-dasharray="1 1"/>
<path d="M50 244.5 H64" stroke="#8c8c8c" stroke-dasharray="1 1"/>
<path d="M34 262.5 H44" stroke="#8c8c8c" stroke-dasharray="1 1"/>
<path d="M50 280.5 H64" stroke="#8c8c8c" stroke-dasharray="1 1"/>
<path d="M50 298.5 H64" stroke="#8c8c8c" stroke-dasharray="1 1"/>
<path d="M50 316.5 H64" stroke="#8c8c8c" stroke-dasharray="1 1"/>
<path d="M50 334.5 H64" stroke="#8c8c8c" stroke-dasharray="1 1"/>
<path d="M34 352.5 H44" stroke="#8c8c8c" stroke-dasharray="1 1"/>
<path d="M50 370.5 H64" stroke="#8c8c8c" stroke-dasharray="1 1"/>
<path d="M9 388.5 H20" stroke="#8c8c8c" stroke-dasharray="1 1"/>
<path d="M9 406.5 H20" stroke="#8c8c8c" stroke-dasharray="1 1"/>
<path d="M9 424.5 H20" stroke="#8c8c8c" stroke-dasharray="1 1"/>
<path d="M14 442.5 H20" stroke="#8c8c8c" stroke-dasharray="1 1"/>
<path d="M34 460.5 H44" stroke="#8c8c8c" stroke-dasharray="1 1"/>
<path d="M34 478.5 H44" stroke="#8c8c8c" stroke-dasharray="1 1"/>
<path d="M34 496.5 H44" stroke="#8c8c8c" stroke-dasharray="1 1"/>
<path d="M34 514.5 H44" stroke="#8c8c8c" stroke-dasharray="1 1"/>
<path d="M34 532.5 H44" stroke="#8c8c8c" stroke-dasharray="1 1"/>
<path d="M34 550.5 H44" stroke="#8c8c8c" stroke-dasharray="1 1"/>
<path d="M34 568.5 H44" stroke="#8c8c8c" stroke-dasharray="1 1"/>
<rect x="4.5" y="6.5" width="8" height="8" rx="1" fill="url(#gexp)" stroke="#9a9ea6"/>
<path d="M6 10.5 H11" stroke="#36478f"/>
<rect x="24.5" y="24.5" width="8" height="8" rx="1" fill="url(#gexp)" stroke="#9a9ea6"/>
<path d="M26 28.5 H31" stroke="#36478f"/>
<rect x="24.5" y="114.5" width="8" height="8" rx="1" fill="url(#gexp)" stroke="#9a9ea6"/>
<path d="M26 118.5 H31" stroke="#36478f"/>
<rect x="24.5" y="186.5" width="8" height="8" rx="1" fill="url(#gexp)" stroke="#9a9ea6"/>
<path d="M26 190.5 H31" stroke="#36478f"/>
<rect x="24.5" y="258.5" width="8" height="8" rx="1" fill="url(#gexp)" stroke="#9a9ea6"/>
<path d="M26 262.5 H31" stroke="#36478f"/>
<rect x="24.5" y="348.5" width="8" height="8" rx="1" fill="url(#gexp)" stroke="#9a9ea6"/>
<path d="M26 352.5 H31" stroke="#36478f"/>
<rect x="4.5" y="438.5" width="8" height="8" rx="1" fill="url(#gexp)" stroke="#9a9ea6"/>
<path d="M6 442.5 H11" stroke="#36478f"/>
<rect x="24.5" y="456.5" width="8" height="8" rx="1" fill="url(#gexp)" stroke="#9a9ea6"/>
<path d="M26 460.5 H31" stroke="#36478f"/>
<path d="M28.5 458 V463" stroke="#36478f"/>
<rect x="24.5" y="474.5" width="8" height="8" rx="1" fill="url(#gexp)" stroke="#9a9ea6"/>
<path d="M26 478.5 H31" stroke="#36478f"/>
<path d="M28.5 476 V481" stroke="#36478f"/>
<rect x="24.5" y="492.5" width="8" height="8" rx="1" fill="url(#gexp)" stroke="#9a9ea6"/>
<path d="M26 496.5 H31" stroke="#36478f"/>
<path d="M28.5 494 V499" stroke="#36478f"/>
<rect x="24.5" y="510.5" width="8" height="8" rx="1" fill="url(#gexp)" stroke="#9a9ea6"/>
<path d="M26 514.5 H31" stroke="#36478f"/>
<path d="M28.5 512 V517" stroke="#36478f"/>
<rect x="24.5" y="528.5" width="8" height="8" rx="1" fill="url(#gexp)" stroke="#9a9ea6"/>
<path d="M26 532.5 H31" stroke="#36478f"/>
<path d="M28.5 530 V535" stroke="#36478f"/>
<rect x="24.5" y="546.5" width="8" height="8" rx="1" fill="url(#gexp)" stroke="#9a9ea6"/>
<path d="M26 550.5 H31" stroke="#36478f"/>
<path d="M28.5 548 V553" stroke="#36478f"/>
<rect x="24.5" y="564.5" width="8" height="8" rx="1" fill="url(#gexp)" stroke="#9a9ea6"/>
<path d="M26 568.5 H31" stroke="#36478f"/>
<path d="M28.5 566 V571" stroke="#36478f"/>
<g transform="translate(21,2)" fill="none" stroke="#2a2d33" stroke-width="1.3"><path d="M.6 3.5 V.6 H3.5 M10.5 .6 H13.4 V3.5 M13.4 10.5 V13.4 H10.5 M3.5 13.4 H.6 V10.5"/><path d="M3.5 5.5 L5.5 3.5 H10 Q10.8 3.5 10.8 4.3 V8.5 L8.8 10.6 H4.3 Q3.5 10.6 3.5 9.8Z" fill="#f6f7f9" stroke-width="1.1"/><rect x="5" y="6" width="3.5" height="3.5" fill="#d6dae0" stroke="none"/></g>
<g transform="translate(21,381)"><rect x=".5" y=".5" width="13" height="13" rx="1" fill="#f0f1f3" stroke="#2a2d33"/><rect x="1" y="1" width="12" height="2" fill="#5a5e66"/><rect x="2.5" y="5" width="3" height="2.5" fill="none" stroke="#2a2d33" stroke-width=".8"/><rect x="2.5" y="9" width="3" height="2.5" fill="none" stroke="#2a2d33" stroke-width=".8"/><path d="M7 5.5 H12 M7 7.5 H11 M7 9.5 H12 M7 11.5 H11" stroke="#2a2d33" stroke-width=".8"/></g>
<g transform="translate(20,399)"><rect x=".5" y=".5" width="14" height="13" fill="#f0f1f3" stroke="#2a2d33"/><rect x="1" y="1" width="13" height="2.5" fill="#5a5e66"/><path d="M1 6.5 H14 M1 9.5 H14 M4.5 3.5 V13" stroke="#3a3e46" stroke-width=".9"/></g>
<g transform="translate(20,417)"><path d="M.5 .5 H11 L14.5 4 V13.5 H.5Z" fill="#f0f1f3" stroke="#2a2d33"/><path d="M11 .5 V4 H14.5" fill="none" stroke="#2a2d33" stroke-width=".8"/><path d="M3 12 V5 H9 V8" fill="none" stroke="#5a5e66"/><rect x="3" y="9" width="3" height="3" fill="none" stroke="#5a5e66" stroke-width=".8"/><path d="M12 8 V12" stroke="#5a5e66" stroke-width=".8"/></g>
<g transform="translate(21,435)"><path d="M.5 8 H7 V.5 H13.5 V13.5 H.5Z" fill="#eceef1" stroke="#2a2d33"/><rect x="1.5" y=".5" width="4" height="5.5" fill="#f8f8f8" stroke="#2a2d33" stroke-width=".9"/><path d="M7 .5 V8 H.5" fill="none" stroke="#2a2d33" stroke-width=".9"/></g>
</svg>
</div>
<!-- drawing area -->
<div class="a" style="left:220px;top:210px;width:864px;height:584px;background:#fff;border-left:2px solid #5e5e5e;border-top:2px solid #5e5e5e"></div>

<!-- 3D drawing -->
<svg class="a" style="left:0;top:0" width="1084" height="794" viewBox="0 0 1084 794">
 <!-- left beam -->
 <path d="M331.6 475.6 L545 641.5 L545 655.5 L331.6 489.6Z" fill="#ebebeb"/>
 <path d="M327 486.0 L331.6 489.6 L547 657.1 L551 663.2 L547 663.1 L327 492.0Z" fill="#f2f2f2"/>
 <path d="M327 492.0 L547 663.1" stroke="#111" stroke-width="1.3"/>
 <path d="M331.6 490.6 L545 656.5" stroke="#777" stroke-width=".8"/>
 <path d="M327 492.0 V490.0 L331.6 490.6 V478.6" fill="none" stroke="#333" stroke-width="1"/>
 <path d="M333.1 479.6 V489.6" stroke="#9a9a9a" stroke-width="1.6"/>
 <path d="M363.4 500.3 V513.3" stroke="#111" stroke-width="1.2"/>
 <path d="M545 641 L550.6 640.0 L550.6 658.0 L555 660 L547 663 L541 659 L545 656Z" fill="#ececec"/>
 <path d="M550.6 641 V659.5 L555 661 L548 663.5 L540 659.5" fill="none" stroke="#111" stroke-width="1.1"/>
 <path d="M550.6 640.0 L872.5 552.0 L872.5 563.0 L550.6 651.0Z" fill="#c1c1c1"/>
 <path d="M550.6 651.0 L872.5 563.0 L872.5 567.0 L550.6 655.0Z" fill="#e6e6e6"/>
 <path d="M550.6 655.5 L855 572.3" stroke="#111" stroke-width="1.3"/>
 <path d="M700 599.1 H709.5 V610.5 L714 612.3 L702 617.6 L695 614.5 H700Z" fill="#ebebeb"/>
 <path d="M700 599.1 V612.1 L695 614.5 L702 617.6 L714 612.3 L709.5 610.5 V596.5" fill="none" stroke="#111" stroke-width="1.1"/>
 <path d="M702 612.6 L709.5 610.5" stroke="#bbb" stroke-width=".8"/>
 <path d="M855 556.8 L867.5 552.4 V566.4 L872 568.1 L863 573.6 L851 570.9 L855 568.8Z" fill="#ececec"/>
 <path d="M855 556.8 V568.8 L851 570.9 L863 573.6 L872 568.1 L867.5 566.4 V552.4" fill="none" stroke="#111" stroke-width="1.1"/>
 <path d="M855 563.8 L864 568.3" stroke="#bbb" stroke-width=".8"/>
 <!-- slab side faces -->
 <path d="M326.3 461.5 L545 631.5 L545 641 L327 472.5Z" fill="#676767" stroke="#1a1a1a" stroke-width="1" stroke-linejoin="round"/>
 <path d="M545 631.5 L872.5 542 L872.5 552.5 L545 641Z" fill="#656565" stroke="#1a1a1a" stroke-width="1" stroke-linejoin="round"/>
 <!-- slab top -->
 <path d="M326.3 461.5 L654 372 L872.5 542 L545 631.5Z" fill="#707070" stroke="#1a1a1a" stroke-width="1" stroke-linejoin="round"/>

 <!-- dimension 0.44 -->
 <g stroke="#7a7a7a" stroke-width=".9"><path d="M299 440 L320 455.5"/><path d="M299 469.5 L320 485"/></g>
 <path d="M298.5 423 V483" stroke="#111" stroke-width="1.2"/>
 <path d="M294.5 430 L303.5 451" stroke="#111" stroke-width="1.1"/><path d="M298 439 L303 451" stroke="#111" stroke-width="2.2"/>
 <path d="M294.5 459 L303.5 481" stroke="#111" stroke-width="1.1"/><path d="M298 469 L303 481" stroke="#111" stroke-width="2.2"/>
 <text x="0" y="0" transform="translate(287,448.5) rotate(-90)" text-anchor="middle" font-family="Liberation Sans" font-size="24" fill="#111">0.44</text>

 <!-- dimension 5.80 -->
 <path d="M663.6 368.4 L825.5 323.3" stroke="#222" stroke-width="1.1"/>
 <path d="M882 539 L1044.7 494.4" stroke="#666" stroke-width="1"/>
 <path d="M801.5 320 L1040 505.5" stroke="#444" stroke-width="1"/>
 <path d="M795.5 327.5 L826.5 329" stroke="#111" stroke-width="2.4"/>
 <path d="M1014 496.5 L1045 498.5" stroke="#111" stroke-width="2.4"/>
 <text x="0" y="0" transform="translate(934,408) rotate(38)" text-anchor="middle" font-family="Liberation Sans" font-size="24" fill="#111">5.80</text>

 <!-- dimension 5.17 -->
 <path d="M551 636.7 L651 715" stroke="#6a6a6a" stroke-width="1"/>
 <path d="M878.7 547 L979.5 625.4" stroke="#6a6a6a" stroke-width="1"/>
 <path d="M629.5 713 L985 615.8" stroke="#555" stroke-width="1"/>
 <path d="M639 716 L647.5 702.5" stroke="#111" stroke-width="1.7"/>
 <path d="M966.5 627 L975 612.5" stroke="#111" stroke-width="1.7"/>
 <text x="0" y="0" transform="translate(799,656) rotate(-15.3)" text-anchor="middle" font-family="Liberation Sans" font-size="24" fill="#111">5.17</text>

 <!-- view cube -->
 <ellipse cx="1038" cy="329" rx="50" ry="24" fill="#ececec"/>
 <ellipse cx="1038" cy="329" rx="40" ry="18.5" fill="#f6f6f6" stroke="#bcbcbc" stroke-width="1.6"/>
 <path d="M1011.5 284 L1044.3 276.7 L1067.3 290.8 L1067 325 L1031 337 L1012 317Z" fill="#e4e4e4"/>
 <path d="M1011.5 284 L1044.3 276.7 L1067.3 290.8 L1031 298.8Z" fill="#eeeeee"/>
 <path d="M1031 298.8 L1067.3 290.8 L1067 325 L1031 337Z" fill="#e0e0e0"/>
 <path d="M1011.5 284 L1044.3 276.7 L1067.3 290.8 L1067 325 L1031 337 L1012 317Z M1011.5 284 L1031 298.8 L1067.3 290.8 M1031 298.8 V337" fill="none" stroke="#a8a8a8" stroke-width="1" stroke-dasharray="4 2"/>
 <text x="0" y="0" transform="translate(1049,320) rotate(-12)" text-anchor="middle" font-family="Liberation Sans" font-weight="bold" font-size="9" fill="#9a9a9a">BACK</text>
 <text x="0" y="0" transform="translate(1021,310) rotate(35)" text-anchor="middle" font-family="Liberation Sans" font-weight="bold" font-size="7" fill="#9a9a9a">LEFT</text>
 <text x="0" y="0" transform="translate(1039,290) rotate(165)" text-anchor="middle" font-family="Liberation Sans" font-weight="bold" font-size="6" fill="#9a9a9a">TOP</text>
 <text x="0" y="0" transform="translate(989,343) rotate(15)" text-anchor="middle" font-family="Liberation Sans" font-weight="bold" font-size="13" fill="#a8a8a8">E</text>
 <text x="0" y="0" transform="translate(1067,356) rotate(-28)" text-anchor="middle" font-family="Liberation Sans" font-weight="bold" font-size="13" fill="#a8a8a8">N</text>
 <text x="0" y="0" transform="translate(1079,316) rotate(-55)" text-anchor="middle" font-family="Liberation Sans" font-weight="bold" font-size="13" fill="#a8a8a8">W</text>
 <!-- steering wheel-ish step -->
 <path d="M1053 372.2 L1084 359.2 V386.3 L1068 390.5 L1053 383.6Z" fill="#cfcfcf"/>
 <path d="M1053 372.2 L1068.5 365.7 V379.4Z" fill="#b0b0b0"/>
 <path d="M1068.5 368 L1084 361.5 V374.7Z" fill="#b0b0b0"/>
 <path d="M1053 372.2 L1084 359.2 M1053 372.2 V383.6 L1068 390.5 L1084 386.3 M1053 372.2 L1068.5 379.4 V368 L1084 374.7" fill="none" stroke="#222" stroke-width="1"/>
 <path d="M1083.5 391 V472" stroke="#c0c0c0" stroke-width="1"/>
 <!-- view controls -->
 <rect x="1062.5" y="220.5" width="11" height="4" fill="#fff" stroke="#333" stroke-width="1.2"/>
 <path d="M1080.5 226.5 V218.5 L1082 216.5 H1084" fill="none" stroke="#333" stroke-width="1.2"/>
</svg>

<!-- red annotation -->
<svg class="a" style="left:0;top:0" width="1084" height="794" viewBox="0 0 1084 794">
 <defs><filter id="shd" x="-20%" y="-20%" width="140%" height="140%"><feGaussianBlur in="SourceAlpha" stdDeviation="2.2"/><feOffset dx="2.5" dy="2.5"/><feComponentTransfer><feFuncA type="linear" slope=".75"/></feComponentTransfer><feMerge><feMergeNode/><feMergeNode in="SourceGraphic"/></feMerge></filter></defs>
 <g filter="url(#shd)">
  <rect x="893.2" y="52.2" width="102.6" height="39.6" fill="none" stroke="#ff0000" stroke-width="4.5"/>
 </g>
 <g filter="url(#shd)">
  <path d="M816 278 L929 107" stroke="#ff0000" stroke-width="9.5" stroke-linecap="round"/>
  <path d="M936 96 L917.5 105.5 L934.5 116.5Z" fill="#ff0000" stroke="#ff0000" stroke-width="2" stroke-linejoin="round"/>
 </g>
</svg>
</body></html>
